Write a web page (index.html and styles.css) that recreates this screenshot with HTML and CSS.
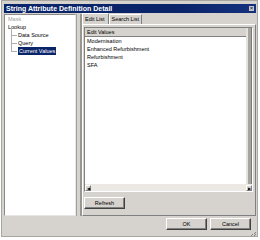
FILE: index.html
```html
<!DOCTYPE html>
<html lang="en">
<head>
    <meta charset="UTF-8">
    <title>String Attribute Definition Detail</title>
    <link rel="stylesheet" href="styles.css">
</head>
<body>
    <div class="window">
        <div class="titlebar">
            <span class="title">String Attribute Definition Detail</span>
            <span class="close">&times;</span>
        </div>
        <div class="main">
            <div class="tree">
                <div class="node disabled">Mask</div>
                <div class="node">Lookup</div>
                <div class="node child">Data Source</div>
                <div class="node child">Query</div>
                <div class="node child"><span class="selected">Current Values</span></div>
            </div>
            <div class="splitter"></div>
            <div class="tabs">
                <div class="tabstrip">
                    <div class="tab active">Edit List</div>
                    <div class="tab">Search List</div>
                </div>
                <div class="tabpanel">
                    <div class="list">
                        <div class="list-body">
                            <div class="list-header">Edit Values</div>
                            <div class="item">Modernisation</div>
                            <div class="item">Enhanced Refurbishment</div>
                            <div class="item">Refurbishment</div>
                            <div class="item">SFA</div>
                        </div>
                        <div class="vscroll"></div>
                        <div class="hscroll">
                            <span class="arrow">&#9664;</span>
                            <span class="thumb"></span>
                            <span class="arrow">&#9654;</span>
                        </div>
                    </div>
                    <div class="panel-actions">
                        <button class="btn">Refresh</button>
                    </div>
                </div>
            </div>
        </div>
        <div class="footer">
            <button class="btn">OK</button>
            <button class="btn">Cancel</button>
            <span class="grip"></span>
        </div>
    </div>
</body>
</html>
```

FILE: styles.css
```css
body {
    margin: 0;
    background: #ffffff;
    font-family: "Liberation Sans", Arial, sans-serif;
    font-size: 5.5px;
    color: #000;
}
.window {
    width: 257px;
    height: 237px;
    margin: 0 0 0 1px;
    background: #d6d3ce;
    border: 1px solid #a8a6a0;
    box-sizing: border-box;
    display: flex;
    flex-direction: column;
    padding: 3px 1px 0 2px;
}
.titlebar {
    height: 9px;
    background: linear-gradient(to right, #0a246a 0%, #0a246a 70%, #16327e 100%);
    color: #fff;
    font-weight: bold;
    font-size: 7px;
    display: flex;
    align-items: center;
    justify-content: space-between;
    padding: 0 2px 0 2px;
}
.close {
    width: 5px;
    height: 5px;
    background: #c8c6c0;
    color: #0a246a;
    font-size: 5px;
    line-height: 5px;
    text-align: center;
    font-weight: bold;
}
.main {
    display: flex;
    height: 202px;
    margin-top: 1px;
}
.tree {
    width: 72px;
    background: #fff;
    border: 1px solid #8c8a86;
    border-right-color: #e8e6e2;
    border-bottom-color: #e8e6e2;
    padding: 0 0 0 3px;
    box-sizing: border-box;
}
.node {
    height: 8px;
    line-height: 8px;
    white-space: nowrap;
}
.node.disabled {
    color: #a0a0a0;
}
.node.child {
    padding-left: 10px;
    position: relative;
}
.node.child::before {
    content: "";
    position: absolute;
    left: 3px;
    top: -4px;
    width: 5px;
    height: 8px;
    border-left: 1px solid #b0b0b0;
    border-bottom: 1px solid #b0b0b0;
}
.selected {
    background: #0a246a;
    color: #fff;
    padding: 0 1px;
    display: inline-block;
    height: 8px;
}
.splitter {
    width: 6px;
    background: #d6d3ce;
    border-left: 1px solid #a0a0a0;
    border-right: 2px solid #989690;
    box-sizing: border-box;
}
.tabs {
    flex: 1;
    display: flex;
    flex-direction: column;
}
.tabstrip {
    display: flex;
    height: 10px;
    align-items: flex-end;
}
.tab {
    height: 9px;
    line-height: 9px;
    padding: 0 2px;
    border: 1px solid #808080;
    border-bottom: none;
    border-left-color: #fff;
    border-top-color: #fff;
}
.tab.active {
    height: 10px;
    line-height: 10px;
    padding: 0 3px 0 2px;
}
.tabpanel {
    flex: 1;
    border: 1px solid #fff;
    border-right-color: #808080;
    border-bottom-color: #808080;
    display: flex;
    flex-direction: column;
    padding: 2px 2px 0 1px;
}
.list {
    height: 163px;
    border: 1px solid #808080;
    border-right-color: #fff;
    border-bottom-color: #fff;
    background: #fff;
    display: grid;
    grid-template-columns: 1fr 6px;
    grid-template-rows: 1fr 7px;
}
.list-header {
    height: 8px;
    line-height: 8px;
    background: #d6d3ce;
    border-bottom: 1px solid #808080;
    padding-left: 2px;
}
.item {
    height: 8px;
    line-height: 8px;
    padding-left: 2px;
}
.vscroll {
    background: #a8a49e;
    border-left: 2px solid #e4e2de;
    border-right: 1px solid #7c7874;
}
.hscroll {
    grid-column: 1 / 3;
    display: flex;
    align-items: center;
    background: #ece9e4;
}
.arrow {
    width: 6px;
    height: 6px;
    font-size: 4px;
    line-height: 6px;
    text-align: center;
    background: #d6d3ce;
    border: 1px solid #808080;
    border-top-color: #fff;
    border-left-color: #fff;
    box-sizing: border-box;
}
.thumb {
    flex: 1;
}
.panel-actions {
    padding-top: 5px;
}
.btn {
    font-family: "Liberation Sans", Arial, sans-serif;
    font-size: 5.5px;
    height: 12px;
    width: 41px;
    padding: 0;
    background: #d6d3ce;
    border: 1px solid #404040;
    border-top-color: #fff;
    border-left-color: #fff;
    box-shadow: inset -1px -1px #808080;
    color: #000;
}
.footer {
    display: flex;
    justify-content: flex-end;
    gap: 3px;
    padding: 2px 5px 0 0;
    position: relative;
    flex: 1;
}
.grip {
    position: absolute;
    right: 0;
    bottom: 0;
    width: 5px;
    height: 5px;
    background: linear-gradient(135deg, transparent 50%, #808080 50%, #808080 60%, transparent 60%, transparent 75%, #808080 75%, #808080 85%, transparent 85%);
}
```
